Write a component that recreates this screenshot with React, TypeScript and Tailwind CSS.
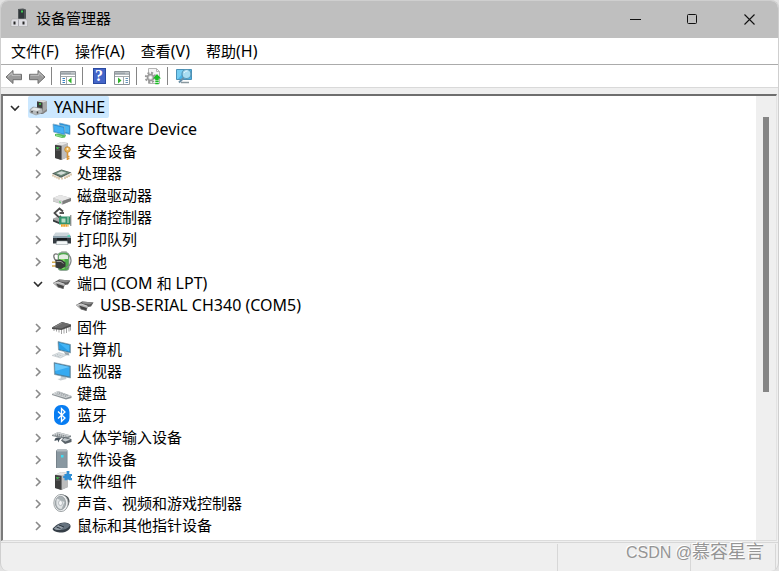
import React, { useState } from 'react';

type IconProps = { children: React.ReactNode };

const Glyph: React.FC<IconProps> = ({ children }) => (
    <svg viewBox="0 0 20 20" className="h-5 w-5 shrink-0" aria-hidden="true">
        {children}
    </svg>
);

const ToolGlyph: React.FC<IconProps> = ({ children }) => (
    <svg viewBox="0 0 18 18" className="h-[18px] w-[18px]" aria-hidden="true">
        {children}
    </svg>
);

/* Latin runs are set one size up so they keep pace with the Chinese glyphs */
const Label: React.FC<{ text: string }> = ({ text }) => (
    <span>
        {text.split(/([\x21-\x7e][\x20-\x7e]*)/).map((run, i) =>
            i % 2 ? (
                <span key={i} className="text-base leading-[22px]">
                    {run}
                </span>
            ) : (
                run
            ),
        )}
    </span>
);

/* Shaded tower shared by several device classes */
const Tower = () => (
    <>
        <path d="M3 4 9 1l7 1v14l-7 3-6-2z" fill="#9a9a9a" />
        <path d="M3 4 9 1l7 1-5 3z" fill="#e6e6e6" />
        <path d="M9.500 4.500 16 2v14l-6.500 3z" fill="#bdbdbd" />
        <path d="M3 4l6.500.8V19L3 17z" fill="#3e3e3e" />
        <path d="M4 6.500h4M4 9h4" stroke="#6a6a6a" />
        <path d="M4.500 7h2" stroke="#38c24a" strokeWidth="1.800" />
    </>
);

const ComputerRootIcon = () => (
    <Glyph>
        <path d="M8 4.500 12 3l6 1v10l-5 3-5-2z" fill="#a6a6a6" />
        <path d="M8 4.500 12 3l6 1-4 1.500z" fill="#dadada" />
        <path d="M8 4.500l5.500 1V17L8 15z" fill="#3c3c3c" />
        <path d="M10 7h2" stroke="#45d04c" strokeWidth="1.500" />
        <path d="M1 12.500 4 10l9 1.500 1 4L7 18l-6-2.500z" fill="#b7bbbd" stroke="#8b8f91" strokeWidth=".6" />
        <path d="M2 12.500 5 10.500l7 1.500-4 2z" fill="#e6e8e9" />
        <path d="M3 14v1.500M8.500 14.500V16.500" stroke="#404040" strokeWidth="1.500" />
        <path d="M14 15l4-3v2l-4 3z" fill="#858585" />
    </Glyph>
);

const SoftwareDeviceIcon = () => (
    <Glyph>
        <path d="M3 15 9 14l5 2-1 2.500-3 .5-7-2z" fill="#55c05a" />
        <path d="M4 15.500l6 1.500.5 1.200-6.500-1.500z" fill="#8fdc8e" />
        <path d="M7.500 4l10.500 2.500v9l-9.500-2.500z" fill="#2489d1" stroke="#6aa4c8" strokeWidth=".7" />
        <path d="M8.500 5.500l8.500 2v6.500l-8-2z" fill="#49b5f1" />
        <path d="M1 5l11.500 2.500.5 8.500L1.500 13z" fill="#248dda" stroke="#8ab1c7" strokeWidth=".8" />
        <path d="M2 6.500l9.500 2.200.4 6L2.300 12.300z" fill="#43b0f4" />
    </Glyph>
);

const SecurityIcon = () => (
    <Glyph>
        <Tower />
        <circle cx="15.500" cy="8.500" r="2.800" fill="#edb757" stroke="#b77a25" strokeWidth=".7" />
        <circle cx="15.500" cy="8" r=".9" fill="#fff4d6" />
        <path d="M15.500 11v8M15.500 15.500h2M15.500 17.500h2" stroke="#d9963a" strokeWidth="1.600" />
    </Glyph>
);

const ProcessorIcon = () => (
    <Glyph>
        <path d="M1 11.500v2M3 12.500v2M5 13.500v2M7 14v2.500M10 14.500v2M13 13.500v2.500M15 12.500v2.500M17 11.500v2.500M19 10.500v2" stroke="#b08a50" strokeWidth=".9" />
        <path d="M0 10.500 9.500 6.500l10 3L9 14.800z" fill="#53605b" />
        <path d="M2 10.300 9.500 7l8 2.500L9 13.500z" fill="#6b8a79" />
        <path d="M4.500 10.300 9.500 8.200l5 1.500L9 12z" fill="#d3dcd8" />
    </Glyph>
);

const DiskIcon = () => (
    <Glyph>
        <path d="M1 13 8 10l11 3v3L10.500 19.500 1 16.500z" fill="#b1b1b1" />
        <path d="M1 13 8 10l11 3-8.500 3z" fill="#e7e7e7" />
        <path d="M1 13l9.500 3v3.500L1 16z" fill="#d2d2d2" />
        <path d="M10.500 16 19 13v3l-8.500 3.500z" fill="#7d7d7d" />
        <path d="M7 16.800l2 .6" stroke="#45cb59" />
    </Glyph>
);

const StorageIcon = () => (
    <Glyph>
        <path d="M11 4.500 7.500 1.500 2.500 6 7 10.500l2-1.500" fill="none" stroke="#4b4b4b" strokeWidth="1.800" />
        <path d="M7.500 6h4.500" stroke="#555" strokeWidth="1.800" />
        <path d="M1 11.500l4-1.500 5 2.500v4l-4-.5-5-2z" fill="#a8aaaa" />
        <path d="M1 12.500l6 2.500v2l-6-2.500z" fill="#353a3c" />
        <path d="M7 9.500h11.500v8H7z" fill="#34936e" />
        <path d="M9.500 11.500h4v4h-4z" fill="#b5dcc6" />
        <path d="M15 11h2M15 13h2M15 15h2" stroke="#c6dccd" />
        <path d="M9 18.500h7.500" stroke="#f0a128" strokeWidth="2.500" strokeDasharray="1.800 .4" />
        <path d="M18.800 8v11" stroke="#777" />
    </Glyph>
);

const PrinterIcon = () => (
    <Glyph>
        <path d="M3.500 3.500h13L19 7H1z" fill="#cbd5da" />
        <path d="M1 7h18v2.500H1z" fill="#8fa3ae" />
        <path d="M1 9h18v5.500H1z" fill="#353c42" />
        <path d="M5 9h10v3H5z" fill="#151a1d" />
        <path d="M5 12h10l1 3.500H4z" fill="#f4f7f8" stroke="#9ba4aa" strokeWidth=".6" />
        <path d="M15.500 7h2.500" stroke="#43d9b0" strokeWidth="1.500" />
    </Glyph>
);

const BatteryIcon = () => (
    <Glyph>
        <path d="M5.500 11C0 7 1 1 6 3.500" fill="none" stroke="#777" strokeWidth="1.300" />
        <rect x="9" y="0" width="6" height="3" rx="1" fill="#b9c2b6" />
        <rect x="6" y="1.500" width="11" height="18" rx="3" fill="#4fa94d" stroke="#8fa097" strokeWidth=".8" />
        <path d="M7 4.500q4.500-2.500 9 0V8H7z" fill="#e4ece1" />
        <path d="M8.500 8h4v10h-4z" fill="#7fdd63" />
        <path d="M16 3c4.500 4 4 11-2 14" fill="none" stroke="#84898a" strokeWidth="1.300" />
        <path d="M0 11.200h5M0 15h5" stroke="#d3ac4f" strokeWidth="1.500" />
        <path d="M3.500 8.500l6.500.5 3.500 2.500v4L9 18l-5.500-1.500z" fill="#383b39" />
        <path d="M4.500 10.500H9l2.500 2" fill="none" stroke="#9b9f9a" />
    </Glyph>
);

const PortIcon = () => (
    <Glyph>
        <path d="M1 10 7 6.500l11.500 1L16 11.500l-3.500.5-1 4L6 14.500z" fill="#595959" />
        <path d="M7 6.500l11.500 1-4 2-7-1z" fill="#8c8c8c" />
        <path d="M1 10l5-1.500 7 2.500-1.500 4.500L6 14z" fill="#b3b3b3" />
        <path d="M4 10.500l8 2.500-.8 2.500L6 13.800z" fill="#454545" />
        <path d="M2 10.200 6.500 9.200l5.500 2" fill="none" stroke="#e1e1e1" strokeWidth=".7" />
    </Glyph>
);

const FirmwareIcon = () => (
    <Glyph>
        <path d="M2 11v3M4.500 11.500v3M7 12v3.500M9.500 12v5M12 11v5.500M14.500 10v6M17 9v5.500M18.500 9v4.500" stroke="#999" strokeWidth=".9" />
        <path d="M0 10.500 10 5l9 2.500v2L9.500 13 0 12z" fill="#4d4d4d" />
        <path d="M0 10.500 10 5l9 2.500L9 11.500z" fill="#6c6c6c" />
        <path d="M3 10 10 6" stroke="#949494" strokeWidth=".7" />
    </Glyph>
);

const PcIcon = () => (
    <Glyph>
        <path d="M6 2.500l12.500 3V14L6.500 11z" fill="#297dae" stroke="#839ba8" strokeWidth=".7" />
        <path d="M7 3.800l10.500 2.400v6.300L7.500 10z" fill="#42b4f5" />
        <path d="M7 4l10 8.500L7.500 10z" fill="#279de5" />
        <path d="M12 13l1.500 3 4 .5-1-3z" fill="#9ba6ac" />
        <path d="M0 16.500 7 13.500l7.500 2.500-6 3z" fill="#dce1e4" stroke="#b3bdc1" strokeWidth=".5" />
        <path d="M3 16.500l5 1.500M5 15.500l5.500 1.500" stroke="#9ca9af" strokeWidth=".6" strokeDasharray="1 .7" />
    </Glyph>
);

const MonitorIcon = () => (
    <Glyph>
        <path d="M9 15l-.5 2.500-3 .5 3 1.500 6-1.500-1-3z" fill="#c6cdd1" />
        <path d="M2 1.500 18.500 5v12L2.500 13.500z" fill="#4a7e9e" stroke="#7595a8" strokeWidth=".6" />
        <path d="M3 2.800 17.500 6v9.500L3.300 12.500z" fill="#36aaf1" />
        <path d="M3 2.800 17.500 6 3.300 10z" fill="#66c6fa" />
    </Glyph>
);

const KeyboardIcon = () => (
    <Glyph>
        <path d="M0 11 6 8l13.500 5v2L14 16.500 0 12z" fill="#8c9397" />
        <path d="M0 11 6 8l13.500 5-5.500 2z" fill="#d9dcde" />
        <path d="M3.500 10.800l11 3M5 9.900l11 3M6.500 9.200l10 3.200" stroke="#7f868b" strokeWidth=".7" strokeDasharray="1.300 .7" />
    </Glyph>
);

const BluetoothIcon = () => (
    <Glyph>
        <rect x="2" y="0" width="15.500" height="20" rx="7" fill="#087df2" />
        <path d="M6 6.500 13 13l-3.500 3.500v-13L13 7l-7 6.500" fill="none" stroke="#fff" strokeWidth="1.300" />
    </Glyph>
);

const HidIcon = () => (
    <Glyph>
        <path d="M0 8 6 5l13 3.500v1.500L14 12 0 9z" fill="#7f878b" />
        <path d="M0 8 6 5l13 3.500-6 2z" fill="#cdd1d3" />
        <path d="M3 8l9 2M5 7l9.500 2.300" stroke="#626a6e" strokeWidth=".8" strokeDasharray="1.300 .8" />
        <path d="M2.500 14c0-3 2-4 4-3.500l3 .5c-2 1-2.500 3-3 4.500L5.500 13z" fill="#43505a" />
        <path d="M9 13.500 12 10l7.500 2v3L13 17z" fill="#596268" />
        <path d="M10 13 12.500 11l6 1.500-5 2z" fill="#bdc4c8" />
    </Glyph>
);

const SoftwareUnitIcon = () => (
    <Glyph>
        <path d="M4 1.500 5.500.5h9l1 1V19H4z" fill="#76828a" />
        <path d="M5 2h9.800v17H5z" fill="#8998a1" />
        <path d="M4 1.500 5.500.5h9l1 1-1 1H5z" fill="#b1babf" />
        <rect x="9" y="6" width="2.500" height="2.500" fill="#3edcf2" />
    </Glyph>
);

const ComponentIcon = () => (
    <Glyph>
        <Tower />
        <path d="M12.500 3h2.200V1.500a1.500 1.500 0 1 1 2.600 0V3H20v2h-1v2h1v2.200h-2.800a1.300 1.300 0 0 0-2.400 0h-2.300V7h-1.300V5h1.300z" fill="#2f8fd5" />
    </Glyph>
);

const SpeakerIcon = () => (
    <Glyph>
        <path d="M8 1.500c6-.5 9.500 2.500 9.500 7-.5 5-4 8.500-8 9.500z" fill="#4b5053" />
        <ellipse cx="9" cy="10" rx="7.200" ry="8.600" fill="#eceeef" stroke="#8d9396" strokeWidth=".8" />
        <ellipse cx="8.500" cy="10" rx="5.200" ry="6.800" fill="#a8b0b3" stroke="#7d8589" strokeWidth=".6" />
        <path d="M5 5.500 12.500 9 9.500 16c-5 0-6-6-4.500-10.500z" fill="#e0e3e5" />
        <ellipse cx="8.500" cy="10" rx="2" ry="2.600" fill="#f4f5f6" stroke="#899297" strokeWidth=".5" />
    </Glyph>
);

const MouseIcon = () => (
    <Glyph>
        <path d="M.5 14C3 10.500 8 7 13 7.500c4 .5 6 2 5.500 4.500-1 3.500-6 6-11 5.500-4-.4-6.500-1.500-7-3.500z" fill="#353e47" />
        <path d="M2 13.500C4 10.500 9 7.500 13 8c2.500.3 4.500 1 5 2.500-2 3-6 4.500-10 4.500-3 0-5-.5-6-1.500z" fill="#65727e" />
        <path d="M2 13.500 7 10l4.500 2-3.500 3c-3 0-5-.5-6-1.500z" fill="#929ca5" />
        <path d="M7 10l5 2M4.500 12l4 1.500" stroke="#2b3540" />
    </Glyph>
);

interface DeviceNode {
    name: string;
    icon: React.FC;
    open?: boolean;
    children?: DeviceNode[];
}

const categories: DeviceNode[] = [
    { name: 'Software Device', icon: SoftwareDeviceIcon },
    { name: '安全设备', icon: SecurityIcon },
    { name: '处理器', icon: ProcessorIcon },
    { name: '磁盘驱动器', icon: DiskIcon },
    { name: '存储控制器', icon: StorageIcon },
    { name: '打印队列', icon: PrinterIcon },
    { name: '电池', icon: BatteryIcon },
    {
        name: '端口 (COM 和 LPT)',
        icon: PortIcon,
        open: true,
        children: [{ name: 'USB-SERIAL CH340 (COM5)', icon: PortIcon }],
    },
    { name: '固件', icon: FirmwareIcon },
    { name: '计算机', icon: PcIcon },
    { name: '监视器', icon: MonitorIcon },
    { name: '键盘', icon: KeyboardIcon },
    { name: '蓝牙', icon: BluetoothIcon },
    { name: '人体学输入设备', icon: HidIcon },
    { name: '软件设备', icon: SoftwareUnitIcon },
    { name: '软件组件', icon: ComponentIcon },
    { name: '声音、视频和游戏控制器', icon: SpeakerIcon },
    { name: '鼠标和其他指针设备', icon: MouseIcon },
];

interface TreeRowProps {
    node: DeviceNode;
    leaf?: boolean;
    selected?: boolean;
}

const TreeRow: React.FC<TreeRowProps> = ({ node, leaf, selected }) => {
    const [open, setOpen] = useState(Boolean(node.open));
    const Icon = node.icon;

    return (
        <li>
            <div className="flex h-[22px] items-center">
                {leaf ? (
                    <span className="w-[25px] shrink-0" />
                ) : (
                    <button
                        type="button"
                        aria-label={node.name}
                        aria-expanded={open}
                        onClick={() => setOpen(!open)}
                        className="flex h-full w-[25px] shrink-0 items-center justify-center pt-px pr-px"
                    >
                        <svg viewBox="0 0 10 10" className="h-[10px] w-[10px]" fill="none" aria-hidden="true">
                            {open ? (
                                <path d="M1 3l4 4 4-4" stroke="#2b2b2b" strokeWidth="1.600" />
                            ) : (
                                <path d="M3 1l4 4-4 4" stroke="#8a8a8a" strokeWidth="1.600" />
                            )}
                        </svg>
                    </button>
                )}
                <span className={`flex h-full items-center gap-[5px] rounded-xs pl-px pr-1 whitespace-nowrap ${selected ? 'bg-[#cce8ff]' : ''}`}>
                    <Icon />
                    <Label text={node.name} />
                </span>
            </div>
            {open && node.children && (
                <ul className="pl-[23px]">
                    {node.children.map((child) => (
                        <TreeRow key={child.name} node={child} leaf={!child.children && !selected} />
                    ))}
                </ul>
            )}
        </li>
    );
};

const TitleBar = () => (
    <header className="flex h-[37px] items-center bg-[#bfbfbf] pl-[9px]">
        <div className="flex flex-1 items-center gap-[6px] pb-[3px]">
            <svg viewBox="0 0 20 20" className="h-5 w-5" aria-hidden="true">
                <path d="M8 1 13 .5l3 1V12l-8 1z" fill="#505557" />
                <path d="M9 2h5v10H9z" fill="#30373a" />
                <path d="M11 3.500h2" stroke="#3fca55" strokeWidth="2" />
                <path d="M2 11h14l1.500 2v5.500H1V13z" fill="#dedee3" stroke="#aaa" strokeWidth=".6" />
                <path d="M4.500 13.500v3M13.500 13.500v3" stroke="#292929" strokeWidth="2" />
                <path d="M8.500 11.500V18" stroke="#aaaab1" />
            </svg>
            <h1>设备管理器</h1>
        </div>
        <button type="button" aria-label="最小化" className="flex h-full w-[57px] items-center justify-center">
            <svg viewBox="0 0 11 11" className="h-[11px] w-[11px]" aria-hidden="true">
                <path d="M0 5.500h11" stroke="#111" />
            </svg>
        </button>
        <button type="button" aria-label="最大化" className="flex h-full w-[57px] items-center justify-center">
            <svg viewBox="0 0 11 11" className="h-[11px] w-[11px]" aria-hidden="true">
                <rect x=".5" y=".5" width="9" height="9" rx="1" fill="none" stroke="#111" />
            </svg>
        </button>
        <button type="button" aria-label="关闭" className="flex h-full w-[57px] items-center justify-center">
            <svg viewBox="0 0 11 11" className="h-[11px] w-[11px]" aria-hidden="true">
                <path d="M.5.5l10 10M10.500.5l-10 10" stroke="#111" strokeWidth="1.100" />
            </svg>
        </button>
    </header>
);

const menus = ['文件(F)', '操作(A)', '查看(V)', '帮助(H)'];

const Separator = () => <span className="mr-[2px] h-[18px] w-px bg-[#858585]" />;

const Toolbar = () => (
    <div className="flex h-[23px] items-center gap-[5px] border-b border-[#d9d9d9] pl-1">
        <button type="button" aria-label="后退">
            <ToolGlyph>
                <path d="M1 10l7-6.500v3.800h8.500v5.400H8v3.800z" fill="#9b9b9b" stroke="#6f6f6f" strokeLinejoin="round" />
                <path d="M3 9.500 7 5.800v2.500h8.500" fill="none" stroke="#c4c4c4" />
            </ToolGlyph>
        </button>
        <button type="button" aria-label="前进">
            <ToolGlyph>
                <path d="M17 10l-7-6.500v3.800H1.500v5.400H10v3.800z" fill="#9b9b9b" stroke="#6f6f6f" strokeLinejoin="round" />
                <path d="M15 9.500 11 5.800v2.500H2.500" fill="none" stroke="#c4c4c4" />
            </ToolGlyph>
        </button>
        <Separator />
        <button type="button" aria-label="显示/隐藏控制台树">
            <ToolGlyph>
                <path d="M1.500 4.500h15v13h-15z" fill="#fff" stroke="#8e9499" />
                <path d="M2 6.500h14" stroke="#9ba3a9" strokeWidth="2.500" />
                <path d="M12.500 6h3" stroke="#f5f5f5" strokeDasharray="1 1" />
                <path d="M2 9.500h14M7.500 10v7" stroke="#a4a9ac" />
                <path d="M3.500 11.500H6M3.500 13.500H6M3.500 15.500H6" stroke="#377fc1" />
                <path d="M12.500 10.500v6L9 13.500z" fill="#32b32d" />
            </ToolGlyph>
        </button>
        <Separator />
        <button type="button" aria-label="帮助" className="flex h-[18px] w-[18px] items-center justify-center">
            <span className="flex h-4 w-[13px] items-center justify-center border border-[#2949a0] bg-[#4465c8] font-['Liberation_Serif',serif] text-base font-bold leading-4 text-white">
                ?
            </span>
        </button>
        <button type="button" aria-label="显示/隐藏操作窗格">
            <ToolGlyph>
                <path d="M1.500 4.500h15v13h-15z" fill="#fff" stroke="#8e9499" />
                <path d="M2 6.500h14" stroke="#9ba3a9" strokeWidth="2.500" />
                <path d="M12.500 6h3" stroke="#f5f5f5" strokeDasharray="1 1" />
                <path d="M2 9.500h14M10.500 10v7" stroke="#a4a9ac" />
                <path d="M12.500 11.500H15M12.500 13.500H15M12.500 15.500H15" stroke="#6695b9" />
                <path d="M5 10.500v6l3.500-3z" fill="#32b32d" />
            </ToolGlyph>
        </button>
        <Separator />
        <button type="button" aria-label="更新驱动程序">
            <ToolGlyph>
                <path d="M4.500 1.500h8l3 3v12h-11z" fill="#f5f5f5" stroke="#b5b5b5" />
                <path d="M12.500 1.500v3h3" fill="none" stroke="#b5b5b5" />
                <circle cx="6.500" cy="10.500" r="4.700" fill="none" stroke="#9a9a9a" strokeWidth="2" strokeDasharray="2 1.690" />
                <circle cx="6.500" cy="10.500" r="3" fill="#d5d5d5" stroke="#999" strokeWidth="1.500" />
                <circle cx="6.500" cy="10.500" r="1.300" fill="#fff" />
                <path d="M13 7l4 4.500h-2.300v2h-3.400v-2H9z" fill="#16bd20" />
                <path d="M11.300 14.700h3.400M11.300 16.700h3.400" stroke="#16bd20" strokeWidth="1.200" />
            </ToolGlyph>
        </button>
        <Separator />
        <button type="button" aria-label="扫描检测硬件改动">
            <ToolGlyph>
                <path d="M1.500 2.500h15v10h-15z" fill="#48b3e8" stroke="#4a91b7" />
                <path d="M2 3h9L3 12H2z" fill="#76cdf2" />
                <path d="M6 15.500h8" stroke="#8a999f" strokeWidth="1.500" />
                <path d="M9 10.500 4 15.500" stroke="#6b8fa5" strokeWidth="2" />
                <circle cx="11.500" cy="7" r="4.500" fill="#a8ddf2" stroke="#5694b3" strokeWidth="1.200" />
                <path d="M9 6q1-2.500 3.500-2" fill="none" stroke="#e4f6fc" />
            </ToolGlyph>
        </button>
    </div>
);

export default function App() {
    const root: DeviceNode = { name: 'YANHE', icon: ComputerRootIcon, open: true, children: categories };

    return (
        <div className="min-h-screen bg-[#e2e2e2] font-['Noto_Sans','Noto_Sans_CJK_SC',sans-serif] text-[15px] leading-[22px] text-black">
            <div className="relative flex min-h-screen flex-col overflow-hidden rounded-lg border-x border-t border-[#cfcfcf] bg-[#efefef]">
                <TitleBar />
                <div className="bg-white">
                    <nav className="flex h-[27px] items-center gap-4 border-b border-[#ababab] pl-[10px]">
                        {menus.map((menu) => (
                            <button type="button" key={menu}>
                                <Label text={menu} />
                            </button>
                        ))}
                    </nav>
                    <Toolbar />
                </div>

                {/* Device tree */}
                <main className="mt-[6px] mr-px flex flex-1 border-2 border-r border-b border-t-[#6e6e6e] border-r-[#e3e3e3] border-b-[#dcdcdc] border-l-[#7b7b7b] bg-white">
                    <ul className="flex-1 pb-1">
                        <TreeRow node={root} selected />
                    </ul>
                    <div className="flex w-5 justify-center bg-[#efefef] pt-[21px]">
                        <div className="h-[65%] w-[6px] bg-[#858585]" />
                    </div>
                </main>

                <footer className="mt-px flex h-[29px] border-t border-[#d7d7d7] pt-px">
                    <div className="flex-1 border-r border-[#d7d7d7]" />
                    <div className="w-[133px] border-r border-[#d7d7d7]" />
                    <div className="mr-[2px] w-[85px] border-r border-[#d7d7d7]" />
                </footer>

                {/* Author mark over the status bar */}
                <span className="absolute right-[14px] bottom-[6px] font-['Liberation_Sans','Noto_Sans_CJK_SC',sans-serif] text-lg leading-6 text-[#959595] [text-shadow:-1px_-1px_0_#ffffff]">
                    <span className="text-base">CSDN @</span>
                    慕容星言
                </span>
            </div>
        </div>
    );
}
